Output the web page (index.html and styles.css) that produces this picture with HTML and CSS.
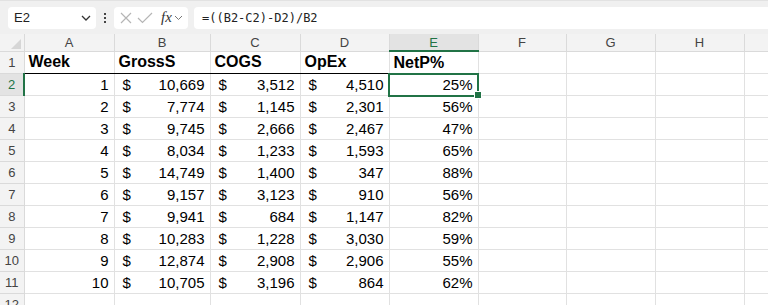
FILE: index.html
```
<!DOCTYPE html>
<html lang="en">
<head>
    <meta charset="UTF-8">
    <title>Book1</title>
    <link rel="stylesheet" href="styles.css">
</head>
<body>
    <div class="toolbar">
        <div class="name-box">
            <span>E2</span>
            <svg class="chev" width="10" height="6" viewBox="0 0 10 6"><path d="M1 1l4 4 4-4" fill="none" stroke="#333" stroke-width="1.3"/></svg>
        </div>
        <div class="dots"><i></i><i></i><i></i></div>
        <div class="fx-box">
            <svg width="14" height="14" viewBox="0 0 14 14"><path d="M2 2l10 10M12 2L2 12" stroke="#b5b5b5" stroke-width="1.2"/></svg>
            <svg width="16" height="14" viewBox="0 0 16 14"><path d="M1 7l4.5 4.5L15 2" fill="none" stroke="#b5b5b5" stroke-width="1.2"/></svg>
            <span class="fx">fx</span>
            <svg width="9" height="6" viewBox="0 0 9 6"><path d="M1 1l3.5 3.5L8 1" fill="none" stroke="#777" stroke-width="1"/></svg>
        </div>
        <div class="formula">=((B2-C2)-D2)/B2</div>
    </div>

    <table class="sheet">
        <colgroup>
            <col style="width:24px">
            <col style="width:90px">
            <col style="width:96px">
            <col style="width:90px">
            <col style="width:89px">
            <col style="width:89px">
            <col style="width:88px">
            <col style="width:89px">
            <col style="width:89px">
            <col style="width:24px">
        </colgroup>
        <thead>
            <tr>
                <th class="corner"><span class="tri"></span></th>
                <th>A</th><th>B</th><th>C</th><th>D</th>
                <th class="sel">E</th>
                <th>F</th><th>G</th><th>H</th><th></th>
            </tr>
        </thead>
        <tbody id="rows">
            <tr class="head-row">
                <th>1</th>
                <td>Week</td><td>GrossS</td><td>COGS</td><td>OpEx</td><td>NetP%</td>
                <td class="plain"></td><td class="plain"></td><td class="plain"></td><td class="plain"></td>
            </tr>
        </tbody>
    </table>

    <script>
        const data = [
            [1, '10,669', '3,512', '4,510', '25%'],
            [2, '7,774', '1,145', '2,301', '56%'],
            [3, '9,745', '2,666', '2,467', '47%'],
            [4, '8,034', '1,233', '1,593', '65%'],
            [5, '14,749', '1,400', '347', '88%'],
            [6, '9,157', '3,123', '910', '56%'],
            [7, '9,941', '684', '1,147', '82%'],
            [8, '10,283', '1,228', '3,030', '59%'],
            [9, '12,874', '2,908', '2,906', '55%'],
            [10, '10,705', '3,196', '864', '62%']
        ];
        const body = document.getElementById('rows');
        function money(v) {
            return `<td><span class="acc"><span>$</span><span>${v}</span></span></td>`;
        }
        data.forEach((r, i) => {
            const n = i + 2;
            const tr = document.createElement('tr');
            tr.innerHTML = `
                <th class="${n === 2 ? 'sel-row' : ''}">${n}</th>
                <td class="num">${r[0]}</td>
                ${money(r[1])}${money(r[2])}${money(r[3])}
                <td class="num${n === 2 ? ' active' : ''}">${r[4]}${n === 2 ? '<span class="handle"></span>' : ''}</td>
                <td></td><td></td><td></td><td></td>`;
            body.appendChild(tr);
        });
        // row 12 is only half visible, as in the window
        const last = document.createElement('tr');
        last.innerHTML = '<th>12</th>' + '<td></td>'.repeat(9);
        body.appendChild(last);
    </script>
</body>
</html>
```

FILE: styles.css
```
body {
    margin: 0;
    font-family: "Liberation Sans", Arial, sans-serif;
    background: #fff;
    overflow: hidden;
    height: 305px;
}
.toolbar {
    display: flex;
    align-items: center;
    height: 34px;
    padding-left: 8px;
    background: #f0f0f0;
    border-top: 1px solid #e2e2e2;
    box-sizing: border-box;
}
.name-box {
    width: 88px;
    height: 22px;
    background: #fff;
    border-radius: 4px;
    display: flex;
    align-items: center;
    justify-content: space-between;
    padding: 0 5px 0 6px;
    box-sizing: border-box;
    font-size: 13px;
    color: #222;
}
.dots {
    width: 18px;
    display: flex;
    flex-direction: column;
    align-items: center;
    gap: 2px;
}
.dots i {
    width: 2px;
    height: 2px;
    background: #444;
    display: block;
}
.fx-box {
    width: 74px;
    height: 22px;
    background: #fff;
    border-radius: 4px;
    display: flex;
    align-items: center;
    gap: 4px;
    padding-left: 5px;
    box-sizing: border-box;
}
.fx {
    font-family: "Liberation Serif", "Times New Roman", serif;
    font-style: italic;
    font-size: 15px;
    color: #333;
    margin-left: 4px;
    margin-right: -2px;
}
.formula {
    flex: 1;
    height: 22px;
    margin-left: 6px;
    background: #fff;
    border-radius: 4px 0 0 4px;
    font-family: "DejaVu Sans Mono", "Liberation Mono", monospace;
    font-size: 12px;
    line-height: 22px;
    padding-left: 8px;
    color: #222;
}
.sheet {
    border-collapse: collapse;
    table-layout: fixed;
    width: 768px;
}
.sheet th {
    background: #f3f3f3;
    font-weight: normal;
    font-size: 13px;
    color: #444;
    padding: 0;
    border: 1px solid #dadada;
}
.sheet thead th {
    height: 16px;
    border-top: none;
}
.sheet thead th.sel {
    background: #e3e3e3;
    color: #217346;
    border-bottom: 2px solid #217346;
}
.corner {
    position: relative;
    border-left: none !important;
}
.tri {
    position: absolute;
    right: 3px;
    bottom: 2px;
    width: 0;
    height: 0;
    border-left: 10px solid transparent;
    border-bottom: 10px solid #d6d6d6;
}
.sheet tbody th {
    border-left: none;
    height: 21px;
}
.sheet tbody th.sel-row {
    background: #e3e3e3;
    color: #217346;
    border-right: 2px solid #217346;
}
.sheet td {
    height: 21px;
    padding: 0 5px;
    border: 1px solid #e1e1e1;
    font-size: 15px;
    color: #000;
    white-space: nowrap;
    overflow: hidden;
}
.head-row td {
    font-weight: bold;
    font-size: 16px;
    padding-left: 4px;
    border-bottom: 1px solid #000;
}
.head-row td.plain {
    border-bottom: 1px solid #e1e1e1;
}
.num {
    text-align: right;
}
.acc {
    display: flex;
    justify-content: space-between;
    padding-left: 3px;
}
td.active {
    position: relative;
    outline: 2px solid #217346;
    outline-offset: -1px;
    overflow: visible;
}
.handle {
    position: absolute;
    right: -4px;
    bottom: -4px;
    width: 6px;
    height: 6px;
    background: #217346;
    border: 1px solid #fff;
}
```
